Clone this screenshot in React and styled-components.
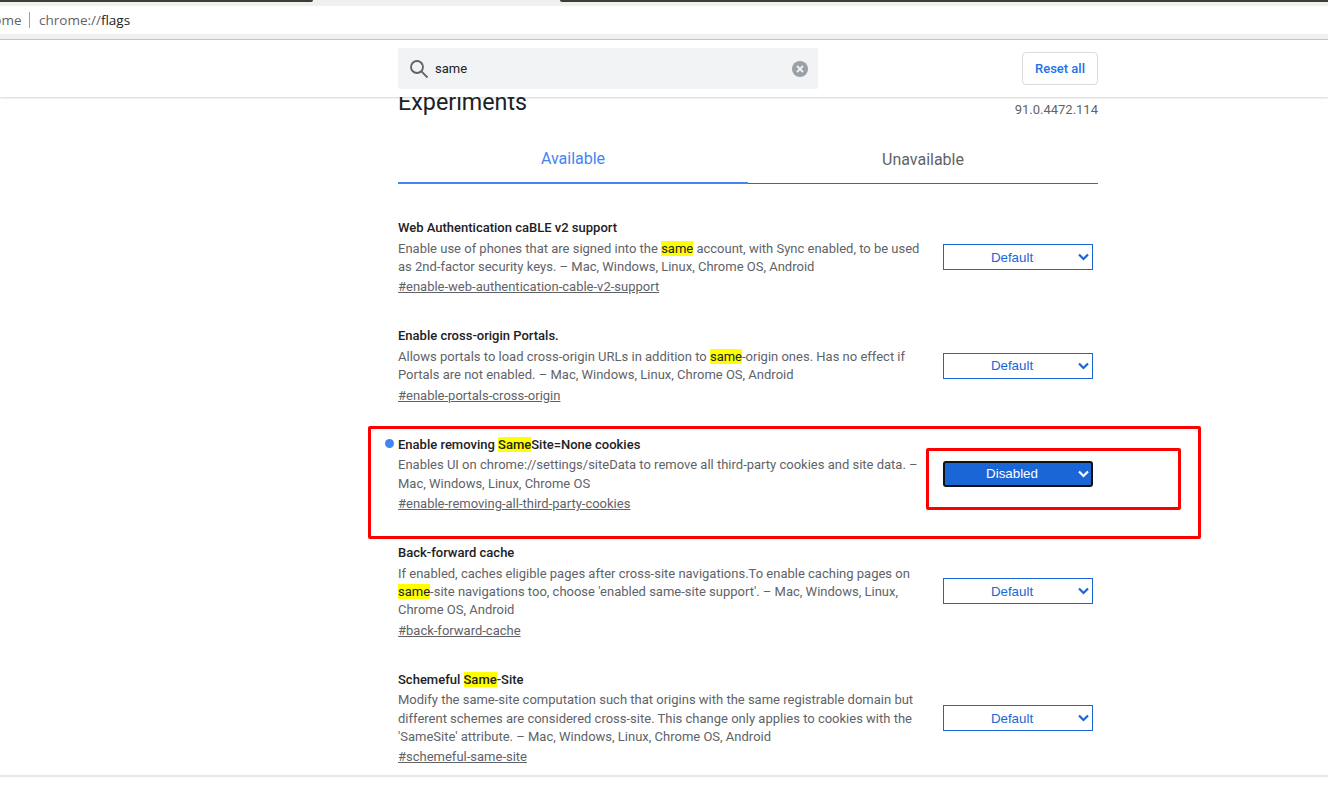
import React from 'react';
import styled, { createGlobalStyle } from 'styled-components';

const GlobalStyle = createGlobalStyle`
  html, body {
    margin: 0;
    padding: 0;
    background: #fff;
    overflow: hidden;
  }
  * { box-sizing: border-box; }
`;

const Page = styled.div`
  width: 1328px;
  height: 787px;
  display: flex;
  flex-direction: column;
  overflow: hidden;
  font-family: Roboto, "Liberation Sans", sans-serif;
  background: #fff;
`;

const TabStrip = styled.div`
  height: 6px;
  flex: none;
  background: #f1f0ee;
  display: flex;
  justify-content: space-between;
`;

const TabEdge = styled.div`
  height: 2px;
  width: ${(p) => p.$width}px;
  background: #3d3c35;
  border-radius: ${(p) => (p.$right ? '0 0 0 5px' : '0 0 5px 0')};
`;

const AddressBar = styled.div`
  height: 28px;
  flex: none;
  background: #fff;
  display: flex;
  align-items: center;
  overflow: hidden;
  font-family: "Open Sans", sans-serif;
  font-size: 13.5px;
  color: #5f6368;
`;

const SiteName = styled.span`
  margin-left: -29px;
  width: 50px;
  flex: none;
  text-align: right;
  white-space: nowrap;
`;

const Divider = styled.span`
  width: 1px;
  height: 16px;
  margin: 0 9px 0 8px;
  background: #9aa0a6;
`;

const UrlText = styled.span`
  b {
    font-weight: 400;
    color: #202124;
  }
`;

const ToolbarGap = styled.div`
  height: 6px;
  flex: none;
  background: #f1f0ee;
  border-bottom: 1px solid #c8c8c8;
`;

const Header = styled.header`
  position: relative;
  z-index: 2;
  height: 57px;
  flex: none;
  background: #fff;
  box-shadow: 0 1px 2px rgba(60, 64, 67, 0.22);
  display: flex;
  align-items: center;
  justify-content: space-between;
  padding: 0 230px 0 398px;
`;

const SearchBox = styled.div`
  width: 420px;
  height: 41px;
  background: #f1f3f4;
  border-radius: 2px;
  display: flex;
  align-items: center;
  padding: 0 10px 0 11px;
  color: #5f6368;
`;

const SearchText = styled.span`
  flex: 1;
  margin-left: 6px;
  font-size: 13px;
  color: #202124;
`;

const ClearButton = styled.span`
  width: 16px;
  height: 16px;
  display: flex;
`;

const ResetButton = styled.button`
  width: 76px;
  height: 33px;
  padding: 0 0 1px;
  background: #fff;
  border: 1px solid #dadce0;
  border-radius: 4px;
  font-family: inherit;
  font-size: 13px;
  font-weight: 500;
  color: #1a73e8;
`;

const Scroller = styled.main`
  flex: 1;
  min-height: 0;
  overflow: hidden;
  padding-left: 398px;
  margin-top: -12px;
`;

const Column = styled.div`
  width: 700px;
`;

const TitleRow = styled.div`
  display: flex;
  justify-content: space-between;
  align-items: flex-end;
  height: 31px;
`;

const Title = styled.h1`
  margin: 0;
  font-size: 23.3px;
  font-weight: 400;
  line-height: 28px;
  color: #202124;
`;

const Version = styled.span`
  font-size: 13px;
  color: #5f6368;
  margin-bottom: -1px;
`;

const Tabs = styled.div`
  display: flex;
  margin-top: 24px;
`;

const Tab = styled.div`
  flex: 1;
  height: 44px;
  padding-top: ${(p) => (p.$active ? '9px' : '10px')};
  text-align: center;
  font-size: 16px;
  line-height: 19px;
  color: ${(p) => (p.$active ? '#4285f4' : '#5f6368')};
  border-bottom: ${(p) => (p.$active ? '2px solid #4285f4' : '1px solid #5f6368')};
  margin-bottom: ${(p) => (p.$active ? '0' : '1px')};
`;

const List = styled.div`
  padding-top: 25px;
`;

const Row = styled.section`
  position: relative;
  display: flex;
  align-items: center;
  justify-content: space-between;
  padding: 9px 5px 23px 0;
  height: ${(p) => p.$height}px;
`;

const RowText = styled.div`
  width: 525px;
  align-self: flex-start;
`;

const RowTitle = styled.h2`
  margin: 0;
  font-size: 13px;
  font-weight: 500;
  line-height: 18.2px;
  color: #202124;
`;

const Mark = styled.mark`
  background: #ffff00;
  color: #202124;
`;

const Description = styled.p`
  margin: 2.4px 0 0;
  font-size: 13px;
  line-height: 18.2px;
  color: #5f6368;
`;

const FlagLink = styled.a`
  display: block;
  margin-top: 2.3px;
  font-size: 13px;
  line-height: 18.2px;
  color: #5f6368;
  text-decoration: underline;
`;

const Select = styled.div`
  position: relative;
  width: 150px;
  height: 26px;
  flex: none;
  display: flex;
  align-items: center;
  justify-content: center;
  padding-right: 12px;
  font-size: 13.33px;
  font-family: "Liberation Sans", Arial, sans-serif;
  color: ${(p) => (p.$on ? '#fff' : '#1a66d6')};
  background: ${(p) => (p.$on ? '#1a66d6' : '#fff')};
  border: ${(p) => (p.$on ? '2px solid #111' : '1px solid #1a66d6')};
  border-radius: ${(p) => (p.$on ? '3px' : '0')};
`;

const Chevron = styled.svg`
  position: absolute;
  right: ${(p) => (p.$on ? '2px' : '3px')};
  top: 50%;
  margin-top: -4px;
`;

const Dot = styled.span`
  position: absolute;
  left: -13px;
  top: 12px;
  width: 9px;
  height: 9px;
  border-radius: 50%;
  background: #4285f4;
`;

const OuterFrame = styled.div`
  position: absolute;
  left: -30px;
  top: -1px;
  width: 833px;
  height: 113px;
  border: 3px solid #ff0000;
  border-radius: 2px;
  pointer-events: none;
`;

const InnerFrame = styled.div`
  position: absolute;
  left: 528px;
  top: 21px;
  width: 255px;
  height: 62px;
  border: 3px solid #ff0000;
  border-radius: 2px;
  pointer-events: none;
`;

const BottomEdge = styled.div`
  height: 12px;
  flex: none;
  background: #fff;
  border-top: 2px solid #e8e8e8;
`;

const flags = [
  {
    height: 108.4,
    title: 'Web Authentication caBLE v2 support',
    desc: (
      <>
        Enable use of phones that are signed into the <Mark>same</Mark> account, with Sync enabled, to be used
        as 2nd-factor security keys. – Mac, Windows, Linux, Chrome OS, Android
      </>
    ),
    link: '#enable-web-authentication-cable-v2-support',
  },
  {
    height: 108.4,
    title: 'Enable cross-origin Portals.',
    desc: (
      <>
        Allows portals to load cross-origin URLs in addition to <Mark>same</Mark>-origin ones. Has no effect if
        Portals are not enabled. – Mac, Windows, Linux, Chrome OS, Android
      </>
    ),
    link: '#enable-portals-cross-origin',
  },
  {
    height: 108.4,
    modified: true,
    title: (
      <>
        Enable removing <Mark>Same</Mark>Site=None cookies
      </>
    ),
    desc: 'Enables UI on chrome://settings/siteData to remove all third-party cookies and site data. – Mac, Windows, Linux, Chrome OS',
    link: '#enable-removing-all-third-party-cookies',
  },
  {
    height: 126.6,
    title: 'Back-forward cache',
    desc: (
      <>
        If enabled, caches eligible pages after cross-site navigations.To enable caching pages on{' '}
        <Mark>same</Mark>-site navigations too, choose 'enabled same-site support'. – Mac, Windows, Linux,
        Chrome OS, Android
      </>
    ),
    link: '#back-forward-cache',
  },
  {
    height: 126.6,
    title: (
      <>
        Schemeful <Mark>Same</Mark>-Site
      </>
    ),
    desc: "Modify the same-site computation such that origins with the same registrable domain but different schemes are considered cross-site. This change only applies to cookies with the 'SameSite' attribute. – Mac, Windows, Linux, Chrome OS, Android",
    link: '#schemeful-same-site',
  },
];

const SelectChevron = ({ on }) => (
  <Chevron $on={on} width="11" height="8" viewBox="0 0 11 8" fill="none" stroke="currentColor" strokeWidth="2.2">
    <path d="M1 1.5 5.5 6 10 1.5" />
  </Chevron>
);

export default function App() {
  return (
    <Page>
      <GlobalStyle />
      <TabStrip>
        <TabEdge $width={313} />
        <TabEdge $width={768} $right />
      </TabStrip>
      <AddressBar>
        <SiteName>Chrome</SiteName>
        <Divider />
        <UrlText>
          chrome://<b>flags</b>
        </UrlText>
      </AddressBar>
      <ToolbarGap />
      <Header>
        <SearchBox>
          <svg width="20" height="20" viewBox="0 0 20 20" fill="none" stroke="#5f6368" strokeWidth="1.8">
            <circle cx="8" cy="8" r="6" />
            <path d="M12.4 12.4 18.5 18.5" />
          </svg>
          <SearchText>same</SearchText>
          <ClearButton>
            <svg width="16" height="16" viewBox="0 0 16 16">
              <circle cx="8" cy="8" r="8" fill="#9aa0a6" />
              <path d="M5 5l6 6M11 5l-6 6" stroke="#f1f3f4" strokeWidth="1.8" />
            </svg>
          </ClearButton>
        </SearchBox>
        <ResetButton>Reset all</ResetButton>
      </Header>
      <Scroller>
        <Column>
          <TitleRow>
            <Title>Experiments</Title>
            <Version>91.0.4472.114</Version>
          </TitleRow>
          <Tabs>
            <Tab $active>Available</Tab>
            <Tab>Unavailable</Tab>
          </Tabs>
          <List>
            {flags.map((flag) => (
              <Row key={flag.link} $height={flag.height}>
                {flag.modified && <Dot />}
                {flag.modified && <OuterFrame />}
                {flag.modified && <InnerFrame />}
                <RowText>
                  <RowTitle>{flag.title}</RowTitle>
                  <Description>{flag.desc}</Description>
                  <FlagLink>{flag.link}</FlagLink>
                </RowText>
                <Select $on={flag.modified}>
                  {flag.modified ? 'Disabled' : 'Default'}
                  <SelectChevron on={flag.modified} />
                </Select>
              </Row>
            ))}
          </List>
        </Column>
      </Scroller>
      <BottomEdge />
    </Page>
  );
}
